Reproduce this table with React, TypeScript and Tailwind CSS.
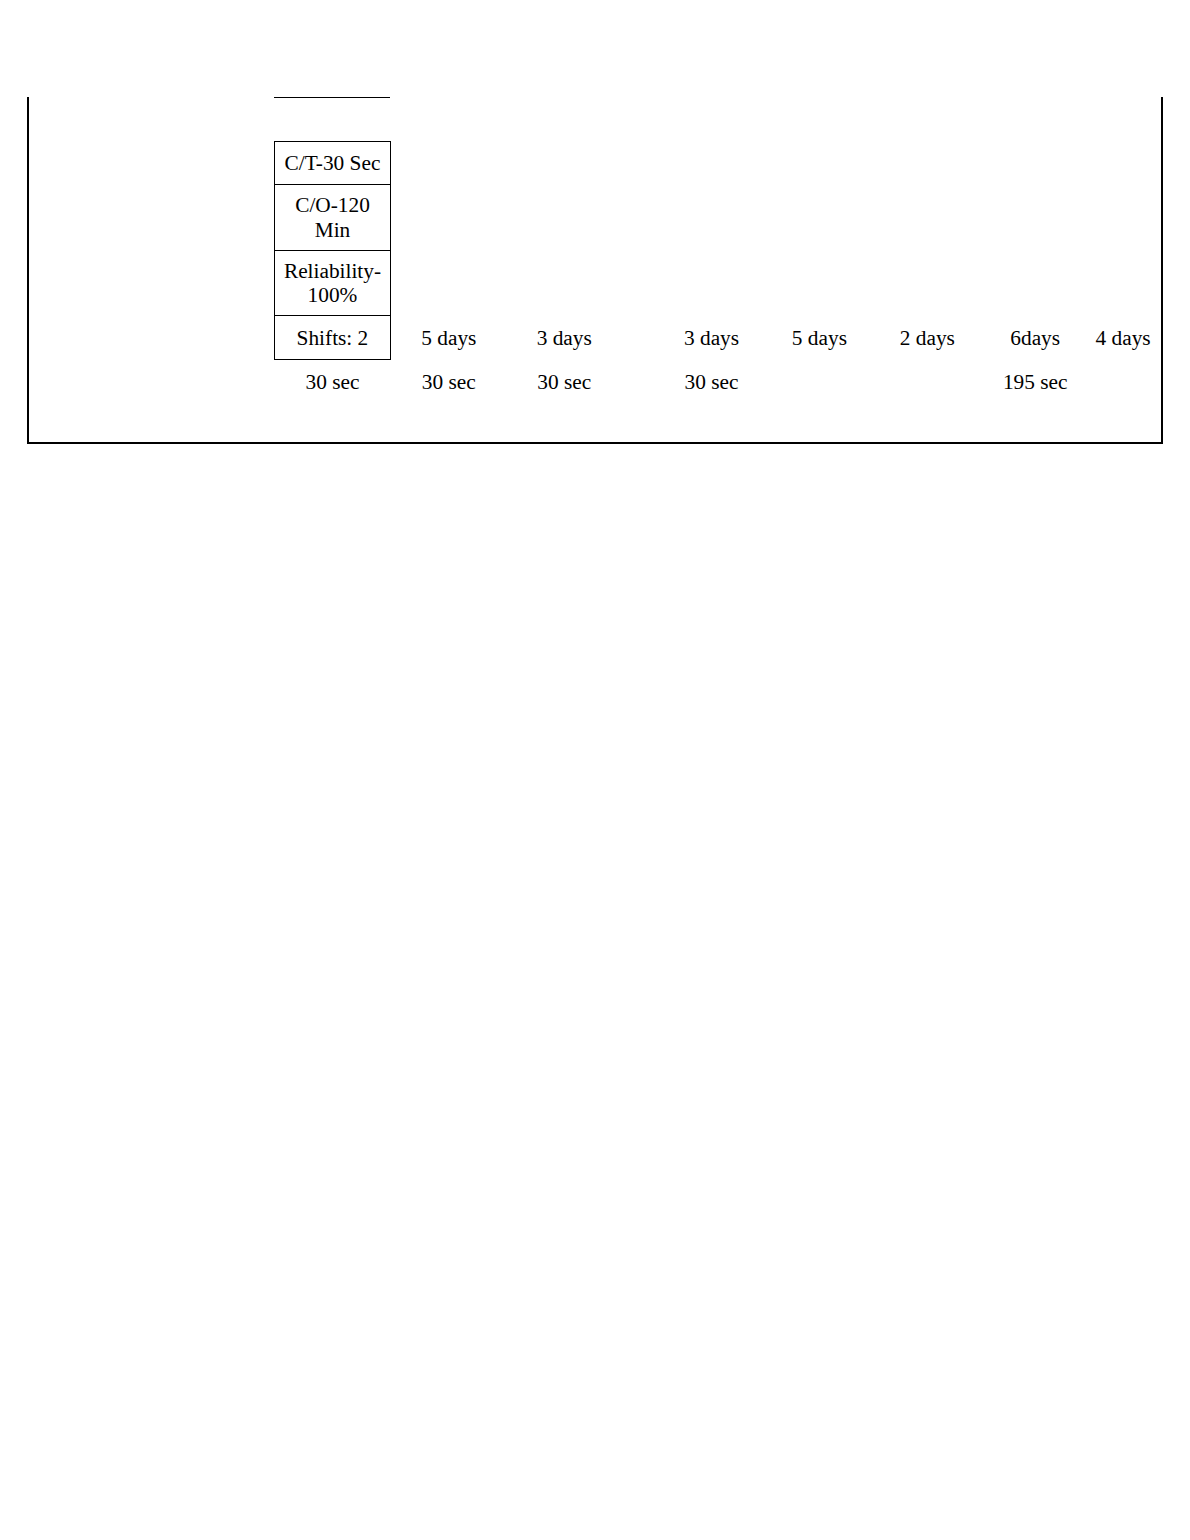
import React from "react";

const cols = [
  { w: "w-[116px]", days: "5 days", sec: "30 sec" },
  { w: "w-[115px]", days: "3 days", sec: "30 sec" },
];
const cols2 = [
  { w: "w-[116px]", days: "3 days", sec: "30 sec" },
  { w: "w-[100px]", days: "5 days", sec: "" },
  { w: "w-[116px]", days: "2 days", sec: "" },
  { w: "w-[100px]", days: "6days", sec: "195 sec" },
  { w: "w-[76px]", days: "4 days", sec: "" },
];

export default function App() {
  return (
    <div className="min-h-[1540px] w-[1190px] bg-white text-black pt-[97px] pl-[27px] font-['Liberation_Serif','Times_New_Roman',serif]">
      <div className="w-[1136px] border-l-2 border-r-2 border-b-2 border-black pl-[245px] pb-[38px] text-[21.33px] leading-[24.5px]">
        <div className="w-[116px] border-t border-black" />
        <div className="h-[43px]" />
        <div className="w-[117px] border-l border-r border-t border-black text-center">
          <div className="h-[43px] border-b border-black flex items-center justify-center whitespace-nowrap">
            C/T-30 Sec
          </div>
          <div className="h-[66px] border-b border-black flex items-center justify-center">
            <div>
              C/O-120
              <br />
              Min
            </div>
          </div>
          <div className="h-[65px] border-b border-black flex items-center justify-center">
            <div>
              Reliability-
              <br />
              100%
            </div>
          </div>
        </div>
        <div className="flex h-[44px] items-center text-center">
          <div className="w-[117px] h-[44px] border-l border-r border-b border-black flex items-center justify-center pt-px">
            Shifts: 2
          </div>
          {cols.map((c, i) => (
            <div key={i} className={`${c.w} whitespace-nowrap`}>
              {c.days}
            </div>
          ))}
          <div className="w-[32px]" />
          {cols2.map((c, i) => (
            <div key={i} className={`${c.w} whitespace-nowrap`}>
              {c.days}
            </div>
          ))}
        </div>
        <div className="flex h-[44px] items-center text-center">
          <div className="w-[117px]">30 sec</div>
          {cols.map((c, i) => (
            <div key={i} className={`${c.w} whitespace-nowrap`}>
              {c.sec}
            </div>
          ))}
          <div className="w-[32px]" />
          {cols2.map((c, i) => (
            <div key={i} className={`${c.w} whitespace-nowrap`}>
              {c.sec}
            </div>
          ))}
        </div>
      </div>
    </div>
  );
}
